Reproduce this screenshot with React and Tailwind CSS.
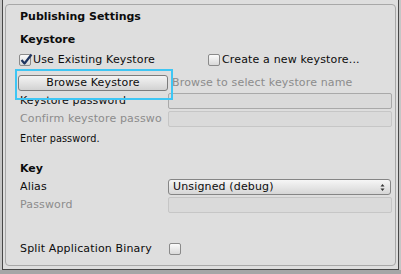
import React from "react";

const font = { fontFamily: '"DejaVu Sans", Verdana, sans-serif' };

function CheckBox({ checked }) {
  return (
    <div className="relative w-[12px] h-[12px] rounded-[2px] border border-[#8a8a8a] bg-gradient-to-b from-[#fbfbfb] to-[#d9d9d9] shrink-0">
      {checked && (
        <svg className="absolute left-[0px] top-[-2px]" width="13" height="13" viewBox="0 0 13 13">
          <path d="M1.5 7 L4.5 10.5 L11.5 1.5" fill="none" stroke="#1f3560" strokeWidth="2.2" strokeLinejoin="round" />
        </svg>
      )}
    </div>
  );
}

function Field({ disabled }) {
  return (
    <div
      className={
        "w-[224px] h-[16px] rounded-[2px] border bg-[#dadada] " +
        (disabled ? "border-[#c6c6c6]" : "border-[#a9a9a9]")
      }
    />
  );
}

function Label({ children, gray }) {
  return (
    <div
      className={
        "w-[148px] shrink-0 overflow-hidden whitespace-nowrap text-[11px] leading-[16px] tracking-[0.15px] " +
        (gray ? "text-[#8c8c8c]" : "text-[#0c0c0c]")
      }
    >
      {children}
    </div>
  );
}

export default function App() {
  return (
    <div className="w-[401px] h-[274px] bg-[#a6a6a6] overflow-hidden" style={font}>
      <div className="h-[270px] bg-[#c6c6c6] pl-[2px] pr-[2px]">
        <div className="h-[270px] w-[397px] border-l border-r border-b border-[#484848] bg-[#dedede] pt-[4px] pl-[2px]">
          <div className="w-[391px] h-[262px] rounded-[4px] border border-[#a8a8a8] pl-[14px] pt-[4px] text-[#0c0c0c]">
            {/* 見出し */}
            <div className="h-[16px] flex items-center text-[11px] font-bold">Publishing Settings</div>

            <div className="mt-[7px] h-[16px] flex items-center text-[11px] font-bold">Keystore</div>

            <div className="mt-[4px] h-[16px] flex items-center text-[11px] tracking-[0.15px]">
              <div className="w-[189px] ml-[-1px] flex items-center gap-[2px]">
                <CheckBox checked />
                <span>Use Existing Keystore</span>
              </div>
              <div className="flex items-center gap-[2px]">
                <CheckBox />
                <span>Create a new keystore...</span>
              </div>
            </div>

            {/* Browse */}
            <div className="relative mt-[7px] h-[16px] flex items-center">
              <div className="ml-[-2px] w-[150px] h-[16px] rounded-[3px] border border-[#7c7c7c] bg-gradient-to-b from-[#f4f4f4] to-[#d2d2d2] flex items-center justify-center text-[11px] tracking-[0.15px]">
                Browse Keystore
              </div>
              <span className="ml-[4px] text-[11px] tracking-[0.15px] text-[#8c8c8c] whitespace-nowrap">
                Browse to select keystore name
              </span>
              <div className="absolute left-[-5px] top-[-6px] w-[158px] h-[31px] border-2 border-[#3ec6f4] pointer-events-none" />
            </div>

            <div className="mt-[2px] flex items-center">
              <Label>Keystore password</Label>
              <Field />
            </div>
            <div className="mt-[2px] flex items-center">
              <Label gray>Confirm keystore passwo</Label>
              <Field disabled />
            </div>

            <div className="mt-[5px] h-[14px] flex items-center text-[9.7px] tracking-[0.1px]">Enter password.</div>

            <div className="mt-[15px] h-[16px] flex items-center text-[11px] font-bold">Key</div>

            <div className="mt-[2px] flex items-center">
              <Label>Alias</Label>
              <div className="w-[223px] h-[16px] rounded-[3px] border border-[#858585] bg-gradient-to-b from-[#f6f6f6] to-[#d6d6d6] flex items-center justify-between pl-[4px] pr-[5px] text-[11px] tracking-[0.15px]">
                <span>Unsigned (debug)</span>
                <svg width="5" height="7" viewBox="0 0 5 7">
                  <path d="M2.5 0 L4.5 2.5 L0.5 2.5 Z M0.5 4.5 L4.5 4.5 L2.5 7 Z" fill="#333" />
                </svg>
              </div>
            </div>
            <div className="mt-[2px] flex items-center">
              <Label gray>Password</Label>
              <Field disabled />
            </div>

            <div className="mt-[28px] h-[16px] flex items-center">
              <Label>Split Application Binary</Label>
              <div className="ml-[1px]">
                <CheckBox />
              </div>
            </div>
          </div>
        </div>
      </div>
    </div>
  );
}
